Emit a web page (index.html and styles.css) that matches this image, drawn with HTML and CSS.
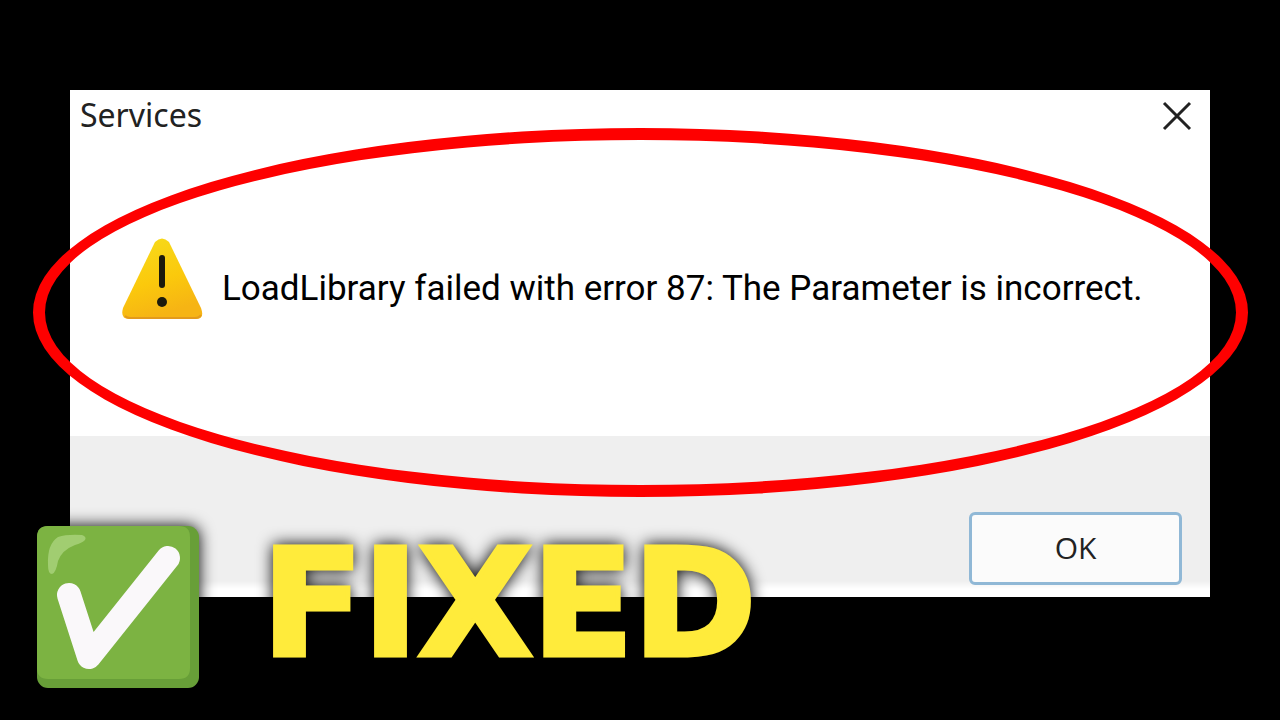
FILE: index.html
```html
<!DOCTYPE html>
<html lang="en">
<head>
  <meta charset="UTF-8" />
  <meta name="viewport" content="width=device-width, initial-scale=1.0" />
  <title>Services</title>
  <link rel="stylesheet" href="styles.css">
</head>
<body>
  <main class="stage">
    <section class="dialog" role="alertdialog" aria-labelledby="title" aria-describedby="message">
      <header class="titlebar">
        <h1 class="title" id="title">Services</h1>
        <button class="close" type="button" aria-label="Close">
          <svg viewBox="0 0 30 30" width="30" height="30" aria-hidden="true">
            <path d="M2 2 28 28M28 2 2 28" fill="none" stroke="#222" stroke-width="3" />
          </svg>
        </button>
      </header>

      <div class="content">
        <svg class="warning" viewBox="0 0 82 82" width="82" height="82" aria-hidden="true">
          <defs>
            <linearGradient id="amber" x1="0" y1="0" x2="0.3" y2="1">
              <stop offset="0" stop-color="#f6dc1c" />
              <stop offset="0.6" stop-color="#fbc90c" />
              <stop offset="1" stop-color="#f6b414" />
            </linearGradient>
          </defs>
          <path d="M33 4Q40-3 47 4L79 70Q83 81 74 81H7Q-2 81 1 70Z" fill="url(#amber)" />
          <path d="M3 78Q5 80 8 80H73Q77 80 79 77" fill="none" stroke="#e39a1c" stroke-width="2" />
          <path d="M40 20V47" stroke="#1c1a0c" stroke-width="6" stroke-linecap="round" />
          <circle cx="40" cy="64" r="5" fill="#1c1a0c" />
        </svg>
        <p class="message" id="message">LoadLibrary failed with error 87: The Parameter is incorrect.</p>
      </div>

      <footer class="actions">
        <button class="ok" type="button">OK</button>
      </footer>

      <div class="ring"></div>
    </section>

    <div class="banner">
      <svg class="check" viewBox="0 0 164 164" width="164" height="164" aria-hidden="true">
        <rect x="1" y="1" width="162" height="162" rx="11" fill="#689f38" />
        <path d="M12 1H143Q154 1 154 12V143Q154 154 143 154H12Q1 154 1 143V12Q1 1 12 1Z" fill="#7cb342" />
        <path d="M12 40Q11 19 22 12Q31 9 46 10Q51 12 49 15Q46 18 39 20Q26 25 22 36Q20 48 16 49Q12 49 12 40Z" fill="#aed581" opacity="0.75" />
        <path d="M33 70 53 132 132 33" fill="none" stroke="#faf8fa" stroke-width="24" stroke-linecap="round" stroke-linejoin="round" />
      </svg>
      <strong class="fixed-label">FIXED</strong>
    </div>
  </main>
</body>
</html>
```
FILE: styles.css
```css
* {
  box-sizing: border-box;
}

body {
  margin: 0;
  background-color: #000;
  font-family: "Open Sans", "Noto Sans", sans-serif;
  color: #222;
}

.stage {
  position: relative;
  min-height: 100vh;
  padding: 90px 70px 32px;
}

.dialog {
  position: relative;
  background-color: #fff;
}

.titlebar {
  display: flex;
  align-items: center;
  justify-content: space-between;
  height: 52px;
  padding: 0 18px 0 10px;
}

.title {
  margin: 0;
  padding-bottom: 4px;
  font-family: "Noto Sans", sans-serif;
  font-size: 32px;
  font-weight: 400;
}

.close {
  display: flex;
  padding: 0;
  border: none;
  background: none;
  cursor: pointer;
}

.content {
  display: flex;
  align-items: center;
  gap: 18px;
  padding: 96px 48px 116px 52px;
}

.warning {
  flex: none;
}

.message {
  margin: 0;
  padding-top: 20px;
  font-family: Roboto, sans-serif;
  font-size: 35px;
  line-height: 40px;
  color: #000;
}

.actions {
  display: flex;
  justify-content: flex-end;
  padding: 76px 28px 12px;
  background: linear-gradient(to top, #fff 8px, #efefef 16px);
}

.ok {
  width: 213px;
  height: 73px;
  padding: 0 0 2px;
  border: 3px solid #90b8d6;
  border-radius: 6px;
  background-color: #fbfbfb;
  font-family: "Open Sans", sans-serif;
  font-size: 30px;
  color: #222;
  cursor: pointer;
}

/* red oval drawn over the whole dialog */
.ring {
  position: absolute;
  top: 38px;
  bottom: 100px;
  left: -37px;
  right: -38px;
  border: 12px solid #fe0000;
  border-radius: 50%;
  pointer-events: none;
}

.banner {
  position: absolute;
  left: 36px;
  bottom: 31px;
  display: flex;
  align-items: center;
  gap: 62px;
}

.check {
  filter: drop-shadow(0 0 8px #000);
}

.fixed-label {
  padding-bottom: 6px;
  font-family: "DejaVu Sans", sans-serif;
  font-size: 148px;
  font-weight: 700;
  line-height: 156px;
  color: #ffeb3b;
  -webkit-text-stroke: 5px #ffeb3b;
  filter: drop-shadow(0 0 8px #000);
}
```
